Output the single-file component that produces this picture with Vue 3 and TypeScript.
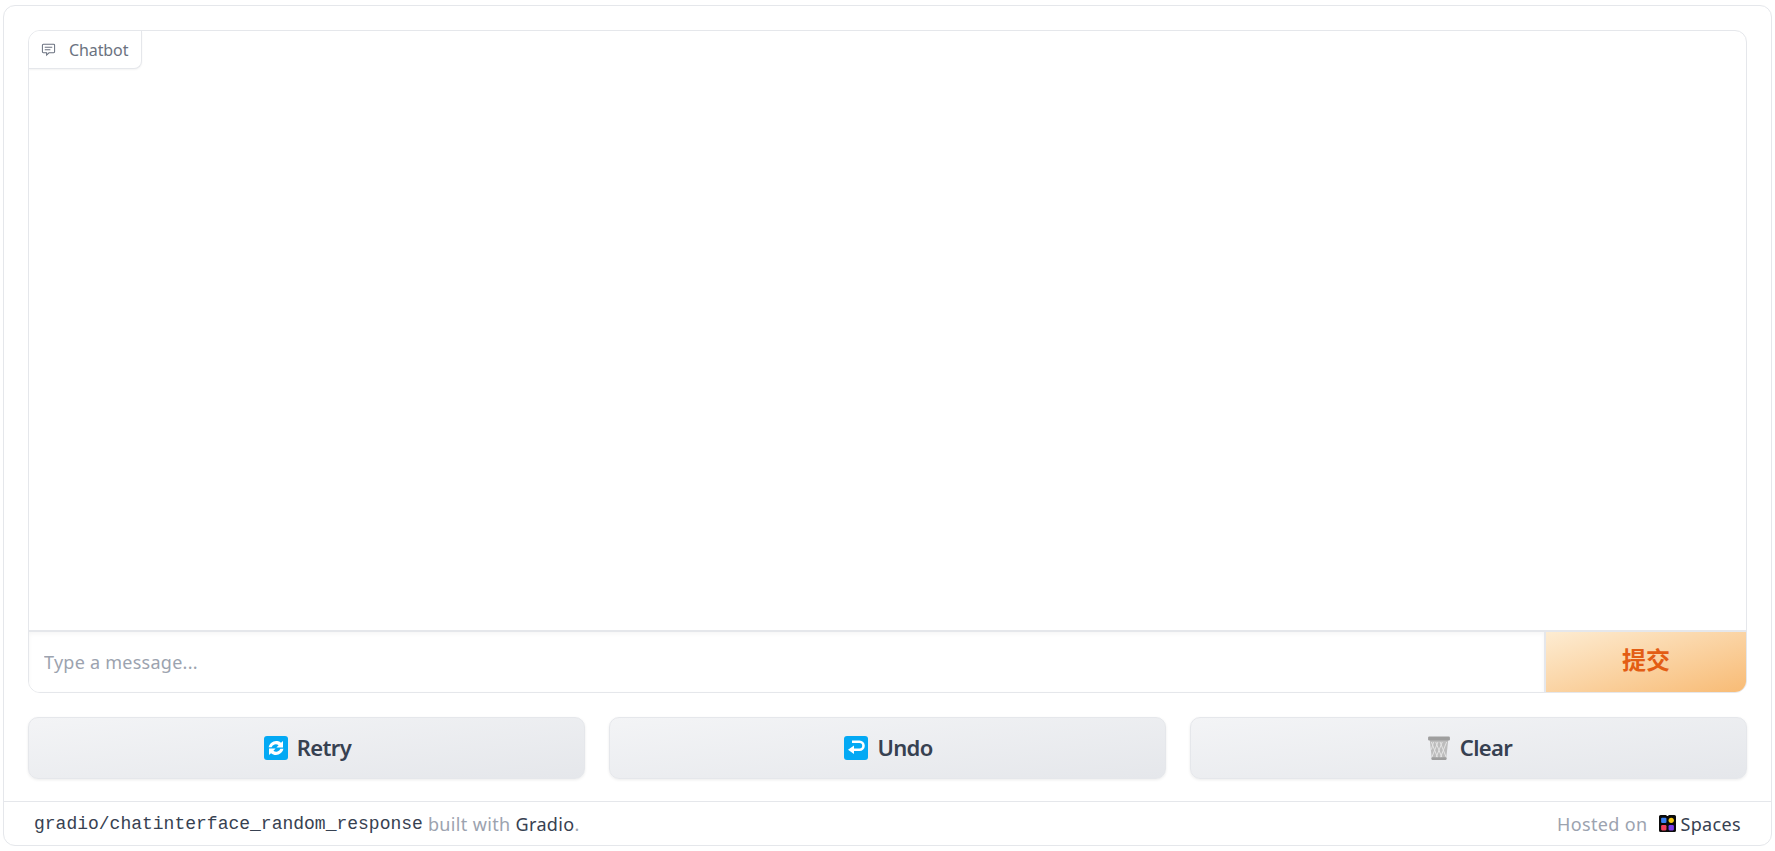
<script setup lang="ts">
const actions = [
  { label: 'Retry', icon: 'retry' },
  { label: 'Undo', icon: 'undo' },
  { label: 'Clear', icon: 'clear' },
]
</script>

<template>
  <div class="page">
    <main class="frame">
      <div class="content">
        <section class="chat">
          <div class="chat-label">
            <svg class="label-icon" viewBox="0 0 16 16" fill="none" stroke="currentColor" stroke-width="1.1">
              <path d="M2.5 2.5h11a1 1 0 0 1 1 1v7a1 1 0 0 1-1 1H8.5L6 14v-2.5H2.5a1 1 0 0 1-1-1v-7a1 1 0 0 1 1-1z" />
              <path d="M4 5.5h8M4 8.3h6" />
            </svg>
            <span>Chatbot</span>
          </div>
          <div class="messages"></div>
          <div class="input-row">
            <input class="msg-input" type="text" placeholder="Type a message..." />
            <button class="submit" type="button">提交</button>
          </div>
        </section>
        <div class="actions">
          <button v-for="a in actions" :key="a.label" class="action" type="button">
            <svg v-if="a.icon === 'retry'" class="emoji" viewBox="0 0 24 24">
              <rect width="24" height="24" rx="3" fill="#03a9f4" />
              <path d="M4.6 11.2a7.6 7.6 0 0 1 12.4-4.4l2-1.9v6.6h-6.6l2.2-2.2a4.4 4.4 0 0 0-7 1.9z" fill="#fff" />
              <path d="M19.4 12.8a7.6 7.6 0 0 1-12.4 4.4l-2 1.9v-6.6h6.6l-2.2 2.2a4.4 4.4 0 0 0 7-1.9z" fill="#fff" />
            </svg>
            <svg v-else-if="a.icon === 'undo'" class="emoji" viewBox="0 0 24 24">
              <rect width="24" height="24" rx="3" fill="#03a9f4" />
              <path d="M8 5.8h7.5a4 4 0 0 1 0 8H6.5" fill="none" stroke="#fff" stroke-width="2.6" />
              <path d="M10 9.5v8.6l-6-4.3z" fill="#fff" />
            </svg>
            <svg v-else class="emoji" viewBox="1.5 1.5 21 22">
              <path d="M3.5 5h17l-2 18h-13z" fill="#bdbdbd" />
              <path d="M5 7l6 15M9 7l6 15M13 7l6 15M19 7l-6 15M15 7L9 22M11 7L5 22M7 7l-2 7" stroke="#e4e4e4" stroke-width=".9" fill="none" />
              <rect x="2" y="2" width="20" height="3.6" rx="1" fill="#9e9e9e" />
              <rect x="5" y="21" width="14" height="2.4" rx="1" fill="#9e9e9e" />
            </svg>
            <span class="action-text">{{ a.label }}</span>
          </button>
        </div>
      </div>
      <footer class="footer">
        <div class="foot-left">
          <code class="repo">gradio/chatinterface_random_response</code>
          <span class="muted"> built with </span><span class="link">Gradio</span><span class="muted">.</span>
        </div>
        <div class="foot-right">
          <span class="muted">Hosted on</span>
          <svg class="spaces-logo" viewBox="0 0 16 16">
            <path d="M1.5 0h4.500a1.500 1.500 0 0 1 1.500 1h1A1.500 1.500 0 0 1 10 0h4.500A1.500 1.500 0 0 1 16 1.500v13a1.500 1.500 0 0 1-1.500 1.500h-13A1.500 1.500 0 0 1 0 14.500v-13A1.500 1.500 0 0 1 1.500 0z" fill="#0b0b0b" />
            <rect x="2" y="2.500" width="5" height="5" rx="1" fill="#3b82f6" />
            <circle cx="11.500" cy="5" r="2.500" fill="#facc15" />
            <rect x="2" y="9.500" width="5" height="5" rx="1" fill="#f43f5e" />
            <rect x="9" y="9.500" width="5" height="5" rx="1" fill="#7c3aed" />
          </svg>
          <span class="link">Spaces</span>
        </div>
      </footer>
    </main>
  </div>
</template>

<style>
html,
body {
  margin: 0;
  background: #fff;
}
</style>

<style scoped>
.page {
  height: 851px;
  box-sizing: border-box;
  padding: 5px 3px 5px 3px;
  font-family: "Noto Sans", "Noto Sans CJK SC", sans-serif;
}

.frame {
  height: 100%;
  box-sizing: border-box;
  border: 1px solid #e5e7eb;
  border-radius: 12px;
  display: flex;
  flex-direction: column;
}

.content {
  flex: 1;
  display: flex;
  flex-direction: column;
  gap: 24px;
  padding: 24px 24px 22px;
}

.chat {
  position: relative;
  flex: 1;
  display: flex;
  flex-direction: column;
  border: 1px solid #e5e7eb;
  border-radius: 12px;
  overflow: hidden;
}

.chat-label {
  position: absolute;
  top: 0;
  left: 0;
  height: 38px;
  box-sizing: border-box;
  padding: 0 13px 0 12px;
  display: flex;
  align-items: center;
  gap: 13px;
  background: #fff;
  border-right: 1px solid #e5e7eb;
  border-bottom: 1px solid #e5e7eb;
  border-bottom-right-radius: 8px;
  box-shadow: 0 1px 2px rgba(0, 0, 0, 0.05);
  color: #6b7280;
  font-size: 16px;
  letter-spacing: -0.1px;
}

.label-icon {
  width: 15px;
  height: 15px;
}

.messages {
  flex: 1;
}

.input-row {
  height: 60px;
  display: flex;
  border-top: 2px solid #e5e7eb;
}

.msg-input {
  flex: 1;
  min-width: 0;
  border: none;
  outline: none;
  padding: 0 15px;
  background: #fff;
  box-shadow: inset 0 2px 4px rgba(0, 0, 0, 0.04);
  font-family: inherit;
  font-size: 18px;
  letter-spacing: 0.25px;
  color: #374151;
}

.msg-input::placeholder {
  color: #9ca3af;
}

.submit {
  width: 202px;
  border: none;
  border-left: 2px solid #e5e7eb;
  padding: 0 0 4px;
  background: linear-gradient(to bottom right, #fdecd2, #f8bb75);
  color: #e35d14;
  font-family: inherit;
  font-size: 24px;
  line-height: 1;
  font-weight: 700;
}

.actions {
  height: 62px;
  display: grid;
  grid-template-columns: repeat(3, 1fr);
  gap: 24px;
}

.action {
  display: flex;
  align-items: center;
  justify-content: center;
  gap: 9px;
  padding: 0 0 0 2px;
  border: 1px solid #e5e7eb;
  border-radius: 10px;
  background: linear-gradient(to bottom right, #f3f4f6, #e5e7eb);
  box-shadow: 0 1px 3px rgba(0, 0, 0, 0.08);
  color: #374151;
  font-family: inherit;
  font-size: 22px;
  font-weight: 600;
  letter-spacing: -0.65px;
}

.action-text {
  position: relative;
  top: -1px;
}

.emoji {
  width: 24px;
  height: 24px;
}

.footer {
  height: 44px;
  box-sizing: border-box;
  border-top: 1px solid #e5e7eb;
  padding: 0 30px 0 30px;
  display: flex;
  align-items: center;
  justify-content: space-between;
  font-size: 18px;
  letter-spacing: 0.35px;
}

.foot-left,
.foot-right {
  display: flex;
  align-items: center;
  white-space: pre;
}

.repo {
  font-family: "Liberation Mono", monospace;
  font-size: 18px;
  letter-spacing: 0;
  color: #374151;
}

.muted {
  color: #9ca3af;
}

.link {
  color: #374151;
}

.spaces-logo {
  width: 17px;
  height: 17px;
  margin: 0 4px 0 12px;
}
</style>
